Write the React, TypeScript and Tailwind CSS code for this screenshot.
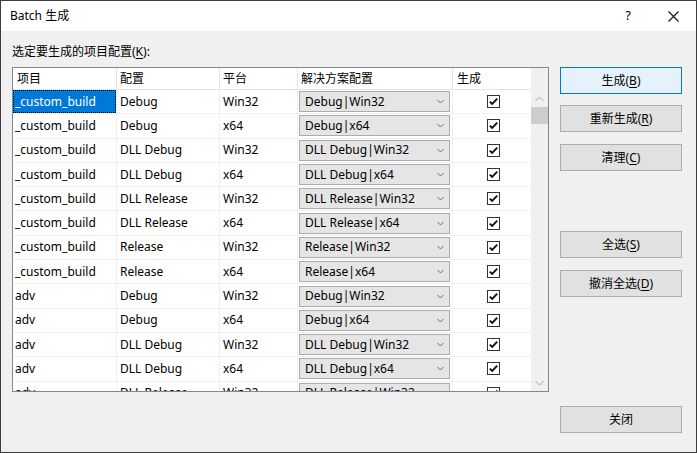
import React from 'react';

const font = { fontFamily: '"Noto Sans", "Noto Sans CJK SC", sans-serif' };

const rows: [string, string, string][] = [
  ['_custom_build', 'Debug', 'Win32'],
  ['_custom_build', 'Debug', 'x64'],
  ['_custom_build', 'DLL Debug', 'Win32'],
  ['_custom_build', 'DLL Debug', 'x64'],
  ['_custom_build', 'DLL Release', 'Win32'],
  ['_custom_build', 'DLL Release', 'x64'],
  ['_custom_build', 'Release', 'Win32'],
  ['_custom_build', 'Release', 'x64'],
  ['adv', 'Debug', 'Win32'],
  ['adv', 'Debug', 'x64'],
  ['adv', 'DLL Debug', 'Win32'],
  ['adv', 'DLL Debug', 'x64'],
  ['adv', 'DLL Release', 'Win32'],
];

function Chevron({ up = false }: { up?: boolean }) {
  return (
    <svg width="9" height="6" viewBox="0 0 9 6" className="block">
      <path d={up ? 'M0.5 5 L4.5 1 L8.5 5' : 'M0.5 1 L4.5 5 L8.5 1'} fill="none" stroke="#a3a3a3" strokeWidth="1" />
    </svg>
  );
}

function Check() {
  return (
    <div className="w-[13px] h-[13px] border border-[#333] bg-white flex items-center justify-center">
      <svg width="11" height="11" viewBox="0 0 11 11">
        <path d="M1.8 5.6 L4.2 8 L9.2 2.6" fill="none" stroke="#111" strokeWidth="1.9" />
      </svg>
    </div>
  );
}

function Btn({ label, k, primary = false, className = '' }: { label: string; k?: string; primary?: boolean; className?: string }) {
  return (
    <div
      className={
        'w-[122px] h-[27px] flex items-center justify-center text-[12px] text-black border ' +
        (primary ? 'bg-[#e5f1fb] border-[#0078d7] ' : 'bg-[#e1e1e1] border-[#adadad] ') +
        className
      }
    >
      {label}
      {k && (
        <>
          (<span className="underline underline-offset-2">{k}</span>)
        </>
      )}
    </div>
  );
}

export default function App() {
  return (
    <div className="w-[697px] h-[453px] border border-[#3c3c3c] bg-[#f0f0f0] flex flex-col text-black" style={font}>
      {/* title bar */}
      <div className="h-[30px] bg-white flex items-center pl-[9px] shrink-0">
        <span className="text-[12px]">Batch 生成</span>
        <span className="ml-auto text-[13px] mr-[37px]">?</span>
        <svg width="11" height="11" viewBox="0 0 11 11" className="mr-[17px]">
          <path d="M0.5 0.5 L10.5 10.5 M10.5 0.5 L0.5 10.5" stroke="#111" strokeWidth="1.1" />
        </svg>
      </div>

      <div className="flex flex-1">
        {/* left */}
        <div className="pl-[11px] pt-[13px] flex flex-col">
          <div className="text-[12px] h-[16px] leading-[16px] mb-[7px]">
            选定要生成的项目配置(<span className="underline underline-offset-2">K</span>):
          </div>
          <div className="w-[537px] h-[325px] border border-[#828790] bg-white flex overflow-hidden">
            <div className="w-[518px] flex flex-col text-[12px]">
              <div className="h-[22px] flex shrink-0 border-b border-[#e5e5e5]">
                <div className="w-[104px] pl-[4px] flex items-center border-r border-[#e5e5e5]">项目</div>
                <div className="w-[103px] pl-[3px] flex items-center border-r border-[#e5e5e5]">配置</div>
                <div className="w-[78px] pl-[3px] flex items-center border-r border-[#e5e5e5]">平台</div>
                <div className="w-[155px] pl-[3px] flex items-center border-r border-[#e5e5e5]">解决方案配置</div>
                <div className="w-[78px] pl-[4px] flex items-center">生成</div>
              </div>
              {rows.map(([p, c, pl], i) => (
                <div key={i} className="h-[24.3px] flex shrink-0 border-b border-[#f0f0f0]">
                  <div className="w-[104px] border-r border-[#f0f0f0] flex">
                    {i === 0 ? (
                      <div className="flex-1 bg-[#0078d7] text-white border border-dotted border-black flex items-center pl-[1px]">
                        {p}
                      </div>
                    ) : (
                      <div className="flex-1 flex items-center pl-[2px]">{p}</div>
                    )}
                  </div>
                  <div className="w-[103px] pl-[3px] flex items-center border-r border-[#f0f0f0]">{c}</div>
                  <div className="w-[78px] pl-[3px] flex items-center border-r border-[#f0f0f0]">{pl}</div>
                  <div className="w-[155px] flex items-center pl-[1px] pr-[2px] border-r border-[#f0f0f0]">
                    <div className="flex-1 h-[21px] bg-[#e5e5e5] border border-[#acacac] flex items-center pl-[5px] pr-[5px]">
                      <span>{`${c}|${pl}`}</span>
                      <span className="ml-auto">
                        <svg width="7" height="5" viewBox="0 0 7 5" className="block">
                          <path d="M0.5 1 L3.5 4 L6.5 1" fill="none" stroke="#6d6d6d" strokeWidth="1" />
                        </svg>
                      </span>
                    </div>
                  </div>
                  <div className="w-[78px] flex items-center justify-center pl-[2px]">
                    <Check />
                  </div>
                </div>
              ))}
            </div>
            {/* scrollbar */}
            <div className="w-[17px] bg-[#f0f0f0] flex flex-col items-center">
              <div className="h-[22px]" />
              <div className="h-[17px] flex items-center justify-center">
                <Chevron up />
              </div>
              <div className="w-[17px] h-[17px] bg-[#cdcdcd]" />
              <div className="flex-1" />
              <div className="h-[17px] flex items-center justify-center">
                <Chevron />
              </div>
            </div>
          </div>
        </div>

        {/* right buttons */}
        <div className="ml-[11px] pt-[36px] flex flex-col">
          <Btn label="生成" k="B" primary />
          <Btn label="重新生成" k="R" className="mt-[11px]" />
          <Btn label="清理" k="C" className="mt-[12px]" />
          <Btn label="全选" k="S" className="mt-[60px]" />
          <Btn label="撤消全选" k="D" className="mt-[12px]" />
          <Btn label="关闭" className="mt-[109px]" />
        </div>
      </div>
    </div>
  );
}
